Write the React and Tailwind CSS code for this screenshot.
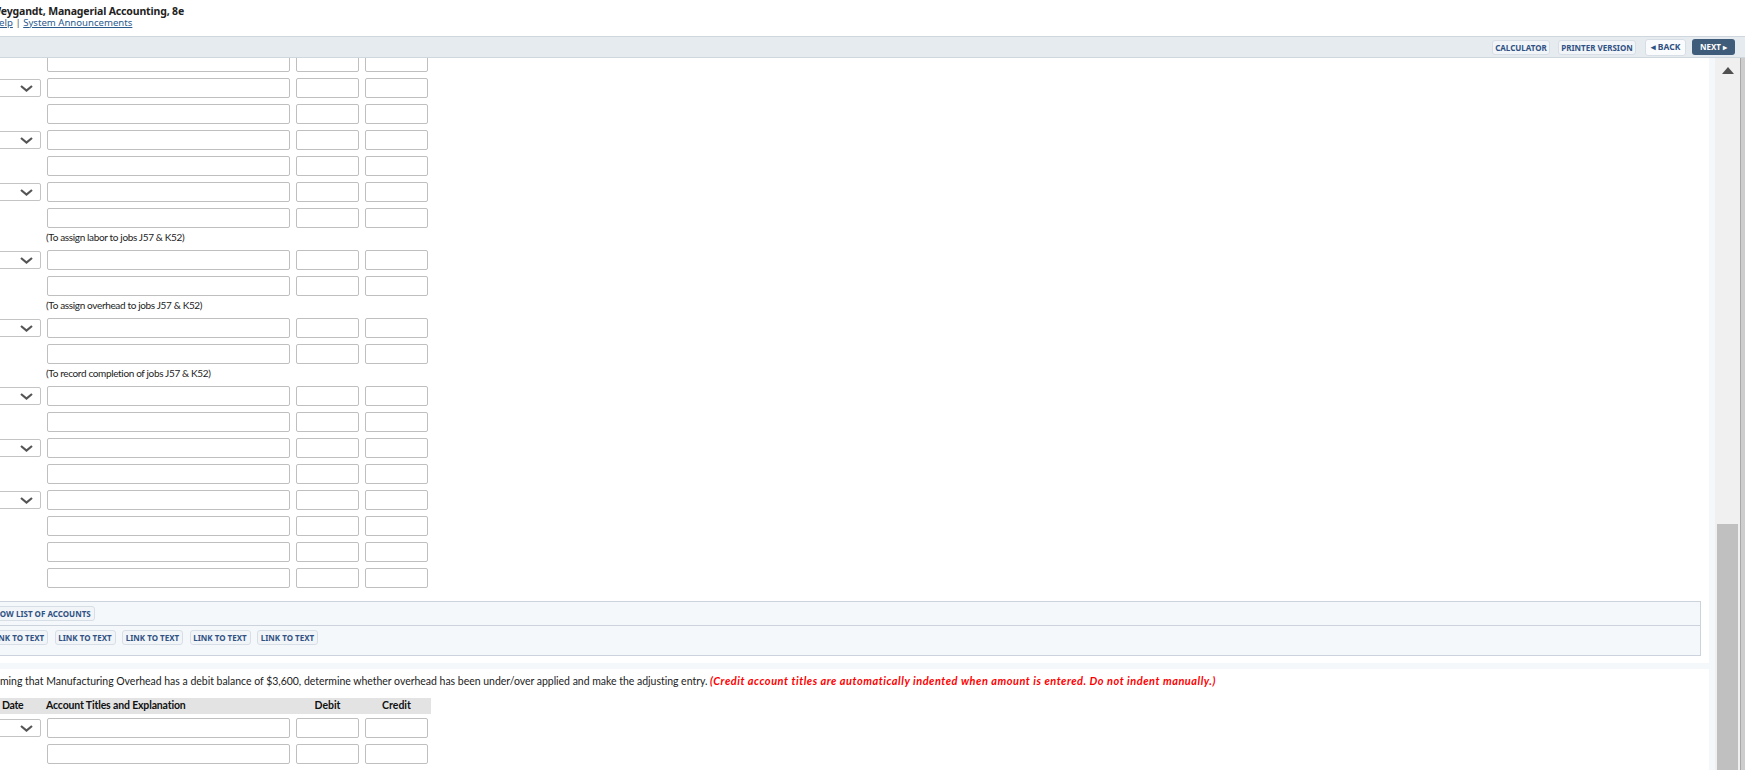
function Field({ className }) {
  return <div className={`h-[20px] rounded-[2px] border border-[#bfbfbf] bg-white ${className}`} />
}

function DateSelect() {
  return (
    <div className="-ml-[60px] mt-[1px] flex h-[18px] w-[101px] items-center justify-end rounded-[2px] border border-[#c4c4c4] bg-white pr-[7px]">
      <svg width="13" height="7" viewBox="0 0 13 7" fill="none" stroke="#555" strokeWidth="2.2">
        <path d="M1 1l5.5 4.5L12 1" />
      </svg>
    </div>
  )
}

function EntryRow({ select, mt = 'mt-[6px]' }) {
  return (
    <div className={`flex h-[20px] ${mt}`}>
      <div className="w-[47px] shrink-0">{select && <DateSelect />}</div>
      <Field className="w-[243px]" />
      <Field className="ml-[6px] w-[63px]" />
      <Field className="ml-[6px] w-[63px]" />
    </div>
  )
}

function Note({ children }) {
  return <div className="ml-[46px] h-[22px] pt-[1px] text-[10px] leading-[16px] tracking-[-0.35px] text-[#222]">{children}</div>
}

function ToolButton({ children, className = '' }) {
  return (
    <button className={`h-[15px] rounded-[3px] border border-[#d8dee6] bg-[#f2f5f8] text-[8px] leading-[13px] font-bold whitespace-nowrap text-[#2f5183] font-['Noto_Sans',sans-serif] ${className}`}>
      {children}
    </button>
  )
}

export default function App() {
  return (
    <div className="flex h-[770px] w-[1745px] flex-col overflow-hidden bg-white font-['Lato','Noto_Sans',sans-serif]">
      <header className="h-[36px] shrink-0 pt-[6px] font-['Noto_Sans',sans-serif]">
        <div className="-ml-[9px] text-[10.5px] leading-[11px] font-bold tracking-[-0.15px] text-[#222]">Weygandt, Managerial Accounting, 8e</div>
        <div className="-ml-[8px] text-[9.6px] leading-[12px] text-[#2a5a8c]">
          <a className="underline">Help</a> <span className="text-[#555]">|</span> <a className="underline">System Announcements</a>
        </div>
      </header>

      <div className="flex h-[22px] shrink-0 items-center justify-end border-y border-[#cfd6de] bg-[#e6ebf0] pr-[10px]">
        <ToolButton className="w-[58px]">CALCULATOR</ToolButton>
        <ToolButton className="ml-[8px] w-[78px]">PRINTER VERSION</ToolButton>
        <button className="ml-[9px] h-[17px] w-[41px] rounded-[3px] border border-[#d8dee6] bg-[#fafbfc] text-[8.5px] leading-[14px] font-bold whitespace-nowrap text-[#2f5183] font-['Noto_Sans',sans-serif]">
          ◂ BACK
        </button>
        <button className="ml-[6px] h-[16px] w-[43px] rounded-[3px] bg-[#3f5c7a] text-[8px] leading-[14px] font-bold whitespace-nowrap text-white font-['Noto_Sans',sans-serif]">
          NEXT ▸
        </button>
      </div>

      <div className="flex min-h-0 flex-1">
        <main className="min-w-0 flex-1 overflow-hidden">
          <div className="-mt-[6px]">
            <EntryRow mt="mt-0" />
            <EntryRow select />
            <EntryRow />
            <EntryRow select />
            <EntryRow />
            <EntryRow select />
            <EntryRow />
            <Note>(To assign labor to jobs J57 &amp; K52)</Note>
            <EntryRow select mt="mt-0" />
            <EntryRow />
            <Note>(To assign overhead to jobs J57 &amp; K52)</Note>
            <EntryRow select mt="mt-0" />
            <EntryRow />
            <Note>(To record completion of jobs J57 &amp; K52)</Note>
            <EntryRow select mt="mt-0" />
            <EntryRow />
            <EntryRow select />
            <EntryRow />
            <EntryRow select />
            <EntryRow />
            <EntryRow />
            <EntryRow />
          </div>

          <div className="mt-[13px] -ml-[10px] mr-[8px] border border-[#ccd3dd] bg-[#f4f8fb]">
            <div className="flex h-[24px] items-center border-b border-[#ccd3dd]">
              <ToolButton className="-ml-[6px] w-[110px]">SHOW LIST OF ACCOUNTS</ToolButton>
            </div>
            <div className="flex h-[29px] gap-[6.5px] pt-[4px]">
              <ToolButton className="-ml-[4px] w-[61px]">LINK TO TEXT</ToolButton>
              <ToolButton className="w-[61px]">LINK TO TEXT</ToolButton>
              <ToolButton className="w-[61px]">LINK TO TEXT</ToolButton>
              <ToolButton className="w-[61px]">LINK TO TEXT</ToolButton>
              <ToolButton className="w-[61px]">LINK TO TEXT</ToolButton>
            </div>
          </div>

          <div className="mt-[7px] h-[6px] bg-[#f4f8fb]" />

          <p className="mt-[4px] -ml-[22px] h-[16px] whitespace-nowrap text-[10.5px] leading-[16px] tracking-[-0.02px] text-[#222]">
            Assuming that Manufacturing Overhead has a debit balance of $3,600, determine whether overhead has been under/over applied and make the adjusting entry.{' '}
            <span className="text-[11px] font-bold tracking-[0.51px] text-[#f00] italic">(Credit account titles are automatically indented when amount is entered. Do not indent manually.)</span>
          </p>

          <div className="mt-[9px] flex h-[16px] w-[431px] items-center bg-[#e3e3e3] text-[10.5px] font-bold text-[#111]">
            <span className="w-[46px] pl-[2px] tracking-[-0.3px]">Date</span>
            <span className="w-[250px] tracking-[-0.15px]">Account Titles and Explanation</span>
            <span className="w-[63px] text-center">Debit</span>
            <span className="ml-[6px] w-[63px] text-center">Credit</span>
          </div>

          <EntryRow select mt="mt-[4px]" />
          <EntryRow />
        </main>

        <div className="w-[6px] shrink-0 bg-[#f4f8fb]" />

        <aside className="flex w-[25px] shrink-0 flex-col items-center bg-[#f0f0f0]">
          <svg className="mt-[9px] ml-[1px]" width="12" height="7" viewBox="0 0 12 7" fill="#505050">
            <path d="M6 0l6 7H0z" />
          </svg>
          <div className="mt-[450px] w-[21px] flex-1 bg-[#c0c0c0]" />
        </aside>

        <div className="w-[5px] shrink-0 border-l border-[#a8a8a8] bg-[#cdcdcd]" />
      </div>
    </div>
  )
}
